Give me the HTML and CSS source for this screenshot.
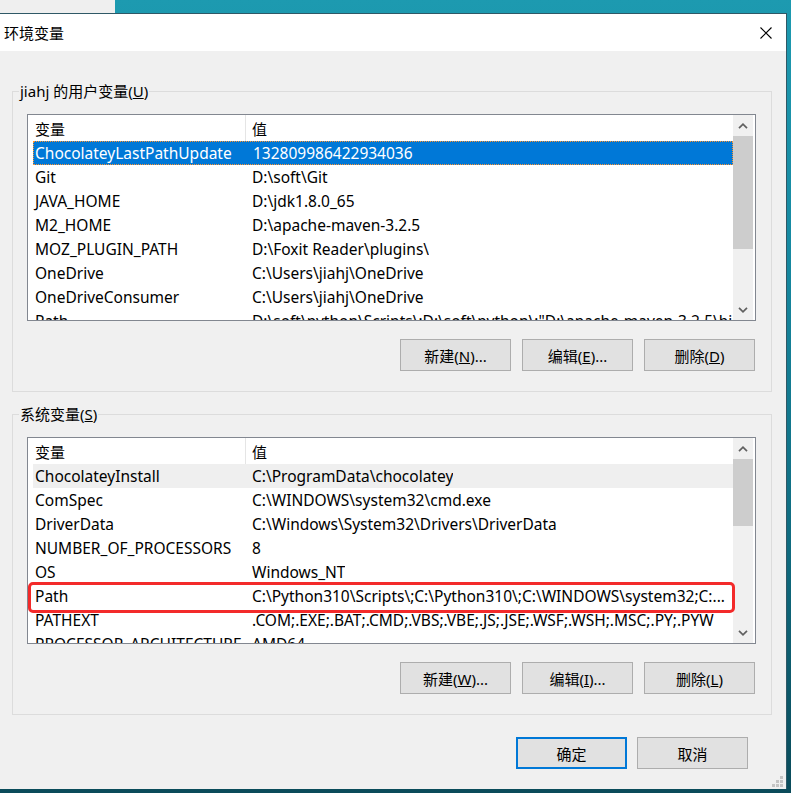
FILE: index.html
```html
<!DOCTYPE html>
<html lang="zh-CN">

<head>
    <meta charset="UTF-8" />
    <title>环境变量</title>
    <link rel="stylesheet" href="styles.css">
</head>

<body>
    <div class="desktop">
        <div class="back-window"></div>

        <div class="dialog">
            <div class="titlebar">
                <span class="title">环境变量</span>
                <svg class="close" width="12" height="12" viewBox="0 0 12 12">
                    <path d="M0.5 0.5 L11.5 11.5 M11.5 0.5 L0.5 11.5" stroke="#000" stroke-width="1.1" fill="none" />
                </svg>
            </div>

            <div class="dialog-body">
                <!-- user variables -->
                <div class="group">
                    <div class="group-title">jiahj 的用户变量(<u>U</u>)</div>
                    <div class="list">
                        <div class="rows">
                            <div class="row head"><span class="c1">变量</span><span class="c2">值</span></div>
                            <div class="row selected"><span class="c1">ChocolateyLastPathUpdate</span><span class="c2">132809986422934036</span></div>
                            <div class="row"><span class="c1">Git</span><span class="c2">D:\soft\Git</span></div>
                            <div class="row"><span class="c1">JAVA_HOME</span><span class="c2">D:\jdk1.8.0_65</span></div>
                            <div class="row"><span class="c1">M2_HOME</span><span class="c2">D:\apache-maven-3.2.5</span></div>
                            <div class="row"><span class="c1">MOZ_PLUGIN_PATH</span><span class="c2">D:\Foxit Reader\plugins\</span></div>
                            <div class="row"><span class="c1">OneDrive</span><span class="c2">C:\Users\jiahj\OneDrive</span></div>
                            <div class="row"><span class="c1">OneDriveConsumer</span><span class="c2">C:\Users\jiahj\OneDrive</span></div>
                            <div class="row"><span class="c1">Path</span><span class="c2">D:\soft\python\Scripts\;D:\soft\python\;"D:\apache-maven-3.2.5\bin"</span></div>
                        </div>
                        <div class="scrollbar">
                            <div class="arrow">
                                <svg width="10" height="6" viewBox="0 0 10 6"><path d="M1 5.2 L5 1.2 L9 5.2" stroke="#606060" stroke-width="1.7" fill="none" /></svg>
                            </div>
                            <div class="track"><div class="thumb" style="height:113px"></div></div>
                            <div class="arrow">
                                <svg width="10" height="6" viewBox="0 0 10 6"><path d="M1 0.8 L5 4.8 L9 0.8" stroke="#606060" stroke-width="1.7" fill="none" /></svg>
                            </div>
                        </div>
                    </div>
                    <div class="buttons">
                        <button>新建(<u>N</u>)...</button>
                        <button>编辑(<u>E</u>)...</button>
                        <button>删除(<u>D</u>)</button>
                    </div>
                </div>

                <!-- system variables -->
                <div class="group">
                    <div class="group-title">系统变量(<u>S</u>)</div>
                    <div class="list">
                        <div class="rows">
                            <div class="row head"><span class="c1">变量</span><span class="c2">值</span></div>
                            <div class="row hover"><span class="c1">ChocolateyInstall</span><span class="c2">C:\ProgramData\chocolatey</span></div>
                            <div class="row"><span class="c1">ComSpec</span><span class="c2">C:\WINDOWS\system32\cmd.exe</span></div>
                            <div class="row"><span class="c1">DriverData</span><span class="c2">C:\Windows\System32\Drivers\DriverData</span></div>
                            <div class="row"><span class="c1">NUMBER_OF_PROCESSORS</span><span class="c2">8</span></div>
                            <div class="row"><span class="c1">OS</span><span class="c2">Windows_NT</span></div>
                            <div class="row"><span class="c1">Path</span><span class="c2">C:\Python310\Scripts\;C:\Python310\;C:\WINDOWS\system32;C:...</span></div>
                            <div class="row"><span class="c1">PATHEXT</span><span class="c2">.COM;.EXE;.BAT;.CMD;.VBS;.VBE;.JS;.JSE;.WSF;.WSH;.MSC;.PY;.PYW</span></div>
                            <div class="row"><span class="c1">PROCESSOR_ARCHITECTURE</span><span class="c2">AMD64</span></div>
                        </div>
                        <div class="scrollbar">
                            <div class="arrow">
                                <svg width="10" height="6" viewBox="0 0 10 6"><path d="M1 5.2 L5 1.2 L9 5.2" stroke="#606060" stroke-width="1.7" fill="none" /></svg>
                            </div>
                            <div class="track"><div class="thumb" style="height:67px"></div></div>
                            <div class="arrow">
                                <svg width="10" height="6" viewBox="0 0 10 6"><path d="M1 0.8 L5 4.8 L9 0.8" stroke="#606060" stroke-width="1.7" fill="none" /></svg>
                            </div>
                        </div>
                        <div class="mark"></div>
                    </div>
                    <div class="buttons">
                        <button>新建(<u>W</u>)...</button>
                        <button>编辑(<u>I</u>)...</button>
                        <button>删除(<u>L</u>)</button>
                    </div>
                </div>

                <div class="dialog-buttons">
                    <button class="default">确定</button>
                    <button>取消</button>
                </div>
            </div>

            <svg class="grip" width="12" height="12" viewBox="0 0 12 12">
                <rect x="8" y="0" width="3" height="3" fill="#c4c4c4" />
                <rect x="4" y="4" width="3" height="3" fill="#c4c4c4" />
                <rect x="8" y="4" width="3" height="3" fill="#c4c4c4" />
                <rect x="0" y="8" width="3" height="3" fill="#c4c4c4" />
                <rect x="4" y="8" width="3" height="3" fill="#c4c4c4" />
                <rect x="8" y="8" width="3" height="3" fill="#c4c4c4" />
            </svg>
        </div>
    </div>
</body>

</html>
```

FILE: styles.css
```css
body {
    margin: 0;
    font-family: 'Noto Sans', 'Noto Sans CJK SC', sans-serif;
    font-size: 15px;
    color: #000;
}

.desktop {
    position: relative;
    width: 791px;
    height: 793px;
    overflow: hidden;
    background: linear-gradient(to bottom, #1d9ab0 0%, #168aa2 30%, #0f6a7e 70%, #0a4b5a 100%);
}

/* another window peeking out behind */
.back-window {
    position: absolute;
    left: 0;
    top: 0;
    width: 115px;
    height: 13px;
    background: #efefef;
}

.dialog {
    position: absolute;
    left: 0;
    top: 13px;
    width: 786px;
    height: 775px;
    background: #f0f0f0;
    border-top: 1px solid #2f5866;
    border-right: 1px solid #2f5866;
}

.titlebar {
    height: 37px;
    background: #fff;
    display: flex;
    align-items: center;
    justify-content: space-between;
    padding: 0 14px 0 4px;
}

.title {
    line-height: 20px;
}

.dialog-body {
    padding-top: 40px;
}

.group {
    margin-left: 12px;
    width: 760px;
    box-sizing: border-box;
    border: 1px solid #dcdcdc;
    padding: 0 15px 20px 14px;
}

.group + .group {
    margin-top: 22px;
}

.group-title {
    width: max-content;
    margin: -11px 0 0 -8px;
    padding: 0 1px;
    line-height: 20px;
    background: #f0f0f0;
}

.list {
    position: relative;
    margin-top: 13px;
    height: 207px;
    box-sizing: border-box;
    border: 1px solid #828790;
    background: #fff;
    display: flex;
}

.rows {
    flex: 1;
    padding-left: 5px;
    overflow: hidden;
    font-size: 15.5px;
}

.row {
    display: flex;
    height: 24px;
    line-height: 24px;
    white-space: nowrap;
    box-sizing: border-box;
}

.row .c1 {
    width: 213px;
    padding-left: 2px;
    box-sizing: border-box;
    flex: none;
}

.row .c2 {
    padding-left: 6px;
    overflow: hidden;
}

.row.head {
    height: 26px;
    line-height: 23px;
    padding-top: 3px;
    font-size: 15px;
}

.row.head .c1 {
    border-right: 1px solid #e5e5e5;
    margin-top: -3px;
    padding-top: 3px;
}

.row.selected {
    background: #0078d7;
    color: #fff;
    border: 1px dotted #ff9430;
    line-height: 22px;
}

.row.selected .c1 {
    padding-left: 1px;
}

.row.hover {
    background: #efefef;
}

.scrollbar {
    width: 20px;
    margin-right: 2px;
    background: #f0f0f0;
    display: flex;
    flex-direction: column;
}

.arrow {
    height: 21px;
    display: flex;
    align-items: center;
    justify-content: center;
    flex: none;
}

.track {
    flex: 1;
}

.thumb {
    background: #cdcdcd;
}

/* red annotation round the Path row */
.mark {
    position: absolute;
    left: 0;
    top: 144px;
    width: 707px;
    height: 31px;
    box-sizing: border-box;
    border: 3px solid #f32a2a;
    border-radius: 5px;
}

.buttons {
    display: flex;
    justify-content: flex-end;
    gap: 11px;
    margin-top: 18px;
    padding-right: 1px;
}

button {
    width: 111px;
    height: 32px;
    padding: 0;
    font-family: inherit;
    font-size: 15px;
    color: #000;
    background: #e1e1e1;
    border: 1px solid #adadad;
}

.dialog-buttons {
    display: flex;
    justify-content: flex-end;
    gap: 10px;
    margin-top: 22px;
    padding-right: 38px;
}

button.default {
    border: 2px solid #0078d7;
}

.grip {
    position: absolute;
    right: 2px;
    bottom: 1px;
}
```
